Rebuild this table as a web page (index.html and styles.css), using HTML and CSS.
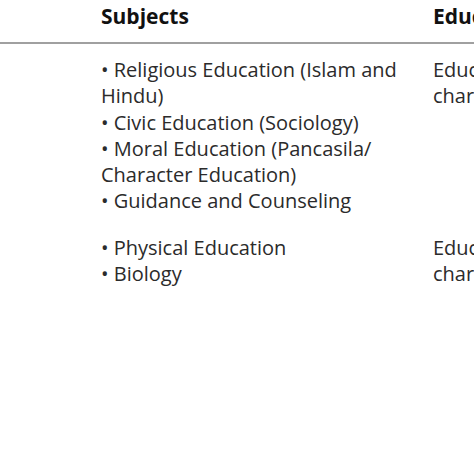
FILE: index.html
```html
<!DOCTYPE html>
<html>
<head>
<meta charset="utf-8">
<link rel="stylesheet" href="styles.css">
</head>
<body>
<div class="table">
  <div class="row head">
    <div class="cell c1"></div>
    <div class="cell c2">Subjects</div>
    <div class="cell c3">Educational values</div>
  </div>
  <div class="row body first">
    <div class="cell c1"></div>
    <div class="cell c2">
      <div class="item">• Religious Education (Islam and Hindu)</div>
      <div class="item">• Civic Education (Sociology)</div>
      <div class="item">• Moral Education (Pancasila/ Character Education)</div>
      <div class="item">• Guidance and Counseling</div>
    </div>
    <div class="cell c3">Education of character</div>
  </div>
  <div class="row body">
    <div class="cell c1"></div>
    <div class="cell c2">
      <div class="item">• Physical Education</div>
      <div class="item">• Biology</div>
    </div>
    <div class="cell c3">Education of character</div>
  </div>
</div>
</body>
</html>
```
FILE: styles.css
```css
html, body {
  margin: 0;
  padding: 0;
  background: #ffffff;
  overflow: hidden;
}
body {
  width: 474px;
  height: 474px;
  font-family: "Open Sans", "Liberation Sans", sans-serif;
  color: #2b2b2b;
}
.table {
  width: 700px;
}
.row {
  display: grid;
  grid-template-columns: 101px 332px 140px;
}
.head {
  font-weight: 700;
  font-size: 21px;
  line-height: 26px;
  color: #111111;
  border-bottom: 2px solid #a0a0a0;
}
.head .cell {
  padding-top: 3px;
  padding-bottom: 13px;
  white-space: nowrap;
}
.body {
  font-size: 20px;
  line-height: 26.3px;
}
.body .cell {
  padding-top: 13px;
  padding-bottom: 7px;
}
.c2 {
  padding-right: 22px;
}
```
